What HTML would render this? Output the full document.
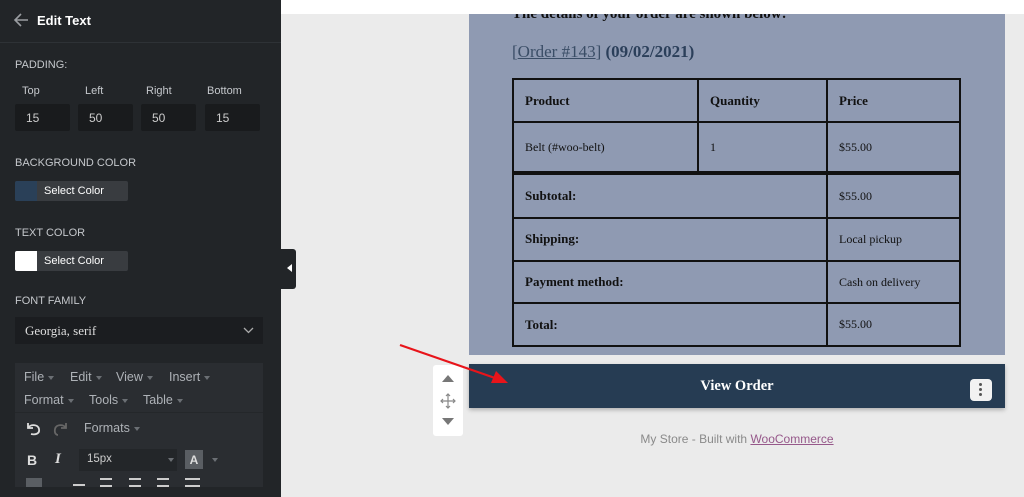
<!DOCTYPE html>
<html><head><meta charset="utf-8"><style>
*{box-sizing:border-box;margin:0;padding:0}
body{width:1024px;height:497px;overflow:hidden;background:#ebebeb;font-family:"Liberation Sans",sans-serif;position:relative}
.a{position:absolute}
#side{left:0;top:0;width:281px;height:497px;background:#222528;color:#c9ccd0}
.lbl{font-size:11px;color:#c5c8cc;position:absolute;left:15px}
.inp{position:absolute;top:104px;width:55px;height:27px;background:#191b1d;border-radius:2px;color:#ccc;font-size:12px;padding:7px 0 0 11px}
.sm{position:absolute;font-size:11px;color:#c5c8cc;top:85px}
.sel{position:absolute;left:15px;width:113px;height:20px;background:#393c40;border-radius:2px;font-size:11px;color:#fff}
.sel i{position:absolute;left:0;top:0;width:22px;height:20px;border-radius:2px 0 0 2px}
.sel span{position:absolute;left:29px;top:4px}
.serif{font-family:"Liberation Serif",serif}
td{border:2px solid #111;font-family:"Liberation Serif",serif;font-size:13px;color:#111;padding-left:11px}
.mn{color:#aeb2b7;font-size:12.5px;position:absolute}
.car{display:inline-block;width:0;height:0;border-left:3px solid transparent;border-right:3px solid transparent;border-top:4px solid #6b6f74;margin-left:4px;vertical-align:middle}
</style></head><body>
<div id="side" class="a">
  <div class="a" style="left:0;top:0;width:281px;height:43px;border-bottom:1px solid #2e3236"></div>
  <svg class="a" style="left:13px;top:12px" width="16" height="16" viewBox="0 0 16 16"><path d="M15 8H2M8 2L2 8l6 6" stroke="#9a9da1" stroke-width="1.6" fill="none"/></svg>
  <div class="a" style="left:37px;top:13px;font-size:13px;font-weight:bold;color:#fff">Edit Text</div>
  <div class="lbl" style="top:59px">PADDING:</div>
  <div class="sm" style="left:22px">Top</div><div class="sm" style="left:85px">Left</div><div class="sm" style="left:146px">Right</div><div class="sm" style="left:207px">Bottom</div>
  <div class="inp" style="left:15px">15</div><div class="inp" style="left:78px">50</div><div class="inp" style="left:141px">50</div><div class="inp" style="left:205px">15</div>
  <div class="lbl" style="top:157px">BACKGROUND COLOR</div>
  <div class="sel" style="top:181px"><i style="background:#2a4058"></i><span>Select Color</span></div>
  <div class="lbl" style="top:227px">TEXT COLOR</div>
  <div class="sel" style="top:251px"><i style="background:#fff"></i><span>Select Color</span></div>
  <div class="lbl" style="top:295px">FONT FAMILY</div>
  <div class="a serif" style="left:15px;top:317px;width:248px;height:27px;background:#1b1d20;font-size:13px;color:#ddd;padding:6px 0 0 10px">Georgia, serif
    <svg class="a" style="left:228px;top:10px" width="11" height="7" viewBox="0 0 11 7"><path d="M1 1l4.5 4.5L10 1" stroke="#aaa" stroke-width="1.3" fill="none"/></svg></div>
  <div class="a" style="left:15px;top:363px;width:248px;height:124px;background:#2a2d31"></div>
  <div class="mn" style="left:24px;top:370px">File<span class="car"></span></div>
  <div class="mn" style="left:70px;top:370px">Edit<span class="car"></span></div>
  <div class="mn" style="left:116px;top:370px">View<span class="car"></span></div>
  <div class="mn" style="left:169px;top:370px">Insert<span class="car"></span></div>
  <div class="mn" style="left:24px;top:393px">Format<span class="car"></span></div>
  <div class="mn" style="left:89px;top:393px">Tools<span class="car"></span></div>
  <div class="mn" style="left:143px;top:393px">Table<span class="car"></span></div>
  <div class="a" style="left:15px;top:412px;width:248px;height:1px;background:#24272a"></div>
  <svg class="a" style="left:24px;top:420px" width="18" height="16" viewBox="0 0 18 16"><path d="M4 3v5h5M4 8c2-4 10-4 11 1s-4 6-8 5" stroke="#ddd" stroke-width="1.8" fill="none"/></svg>
  <svg class="a" style="left:52px;top:420px" width="18" height="16" viewBox="0 0 18 16"><path d="M14 3v5H9M14 8C12 4 4 4 3 9s2 6 3 6" stroke="#666" stroke-width="1.8" fill="none"/></svg>
  <div class="mn" style="left:84px;top:421px">Formats<span class="car"></span></div>
  <div class="a" style="left:27px;top:452px;font-weight:bold;color:#ddd;font-size:14px">B</div>
  <div class="a serif" style="left:55px;top:451px;font-style:italic;font-weight:bold;color:#ddd;font-size:15px">I</div>
  <div class="a" style="left:79px;top:449px;width:98px;height:22px;background:#232629;color:#ccc;font-size:11.5px;padding:4px 0 0 8px">15px<span class="car" style="position:absolute;left:85px;top:9px"></span></div>
  <div class="a" style="left:185px;top:450px;width:18px;height:19px;background:#5a5e63;color:#ddd;font-size:12px;font-weight:bold;text-align:center;padding-top:3px">A</div><span class="car a" style="left:208px;top:458px"></span>
  <div class="a" style="left:26px;top:478px;width:16px;height:9px;background:#5a5e63"></div>
  <div class="a" style="left:73px;top:484px;width:12px;height:2px;background:#ccc"></div>
  <div class="a" style="left:100px;top:478px;width:12px;height:9px;border-top:2px solid #ccc;border-bottom:2px solid #ccc"></div>
  <div class="a" style="left:129px;top:478px;width:12px;height:9px;border-top:2px solid #ccc;border-bottom:2px solid #ccc"></div>
  <div class="a" style="left:157px;top:478px;width:12px;height:9px;border-top:2px solid #ccc;border-bottom:2px solid #ccc"></div>
  <div class="a" style="left:185px;top:478px;width:15px;height:9px;border-top:2px solid #ccc;border-bottom:2px solid #ccc"></div>
</div>
<div class="a" style="left:281px;top:249px;width:15px;height:40px;background:#222528;border-radius:0 3px 3px 0"></div>
<div class="a" style="left:287px;top:264px;width:0;height:0;border-top:4px solid transparent;border-bottom:4px solid transparent;border-right:5px solid #fff"></div>
<div class="a" style="left:281px;top:0;width:743px;height:14px;background:#fff"></div>
<div class="a" style="left:469px;top:14px;width:536px;height:341px;background:#8f9ab2"></div>
<div class="a serif" style="left:512px;top:14px;height:8px;overflow:hidden;font-size:15px;font-weight:bold;color:#111"><div style="margin-top:-8px">The details of your order are shown below:</div></div>
<div class="a serif" style="left:512px;top:42px;font-size:17px;color:#2b3f5a"><span style="color:#3a4d66">[<u>Order #143</u>]</span> <b>(09/02/2021)</b></div>
<table class="a" style="left:512px;top:78px;width:449px;height:269px;border-collapse:collapse">
<tr style="height:43px"><td style="width:185px"><b>Product</b></td><td style="width:129px"><b>Quantity</b></td><td><b>Price</b></td></tr>
<tr style="height:51px;border-bottom:4px solid #111"><td style="font-size:12px">Belt (#woo-belt)</td><td style="font-size:12px">1</td><td style="font-size:12px">$55.00</td></tr>
<tr><td colspan="2"><b>Subtotal:</b></td><td style="font-size:12px">$55.00</td></tr>
<tr><td colspan="2"><b>Shipping:</b></td><td style="font-size:12px">Local pickup</td></tr>
<tr><td colspan="2"><b>Payment method:</b></td><td style="font-size:12px">Cash on delivery</td></tr>
<tr><td colspan="2"><b>Total:</b></td><td style="font-size:12px">$55.00</td></tr>
</table>
<div class="a" style="left:469px;top:364px;width:536px;height:44px;background:#263c53;box-shadow:0 2px 4px rgba(0,0,0,.25)"></div>
<div class="a serif" style="left:469px;top:378px;width:536px;text-align:center;color:#fff;font-weight:bold;font-size:14.5px">View Order</div>
<div class="a" style="left:970px;top:379px;width:22px;height:22px;background:#f2f2f2;border-radius:4px"></div>
<div class="a" style="left:979px;top:383px;width:3px;height:3px;background:#555;border-radius:50%;box-shadow:0 5px 0 #555,0 10px 0 #555"></div>
<div class="a" style="left:433px;top:365px;width:30px;height:71px;background:#fff;border-radius:3px"></div>
<div class="a" style="left:442px;top:375px;border-left:6px solid transparent;border-right:6px solid transparent;border-bottom:7px solid #777"></div>
<svg class="a" style="left:440px;top:393px" width="16" height="16" viewBox="0 0 16 16"><path d="M8 1v14M1 8h14M6 3l2-2 2 2M6 13l2 2 2-2M3 6L1 8l2 2M13 6l2 2-2 2" stroke="#888" stroke-width="1.2" fill="none"/></svg>
<div class="a" style="left:442px;top:418px;border-left:6px solid transparent;border-right:6px solid transparent;border-top:7px solid #777"></div>
<svg class="a" style="left:395px;top:340px" width="120" height="50" viewBox="0 0 120 50"><path d="M5 5L100 38" stroke="#e8141a" stroke-width="2.2"/><path d="M113 43L96 43L101 31Z" fill="#e8141a"/></svg>
<div class="a" style="left:469px;top:432px;width:536px;text-align:center;font-size:12px;color:#8a8a8a">My Store - Built with <u style="color:#96588a">WooCommerce</u></div>
</body></html>
